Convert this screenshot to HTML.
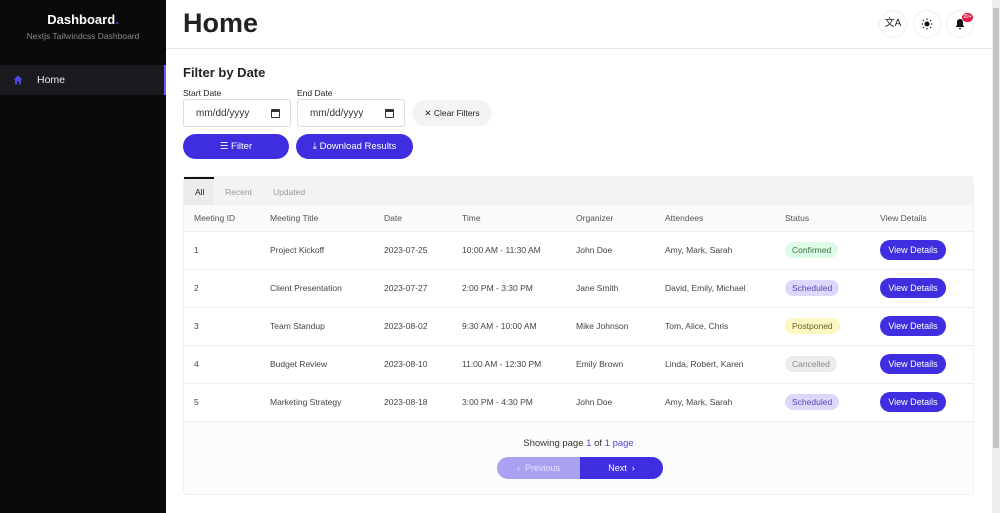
<!DOCTYPE html>
<html><head><style>
*{box-sizing:border-box;margin:0;padding:0}
body{width:1000px;height:513px;overflow:hidden;font-family:"Liberation Sans",sans-serif;background:#fff;position:relative;color:#222}
.sb{position:absolute;left:0;top:0;width:166px;height:513px;background:#0a0a0d}
.sb h1{position:absolute;top:12px;width:166px;text-align:center;color:#fff;font-size:13px;font-weight:bold}
.sb h1 span{color:#4f46e5}
.sb p{position:absolute;top:31px;width:166px;text-align:center;color:#888;font-size:8.5px}
.nav{position:absolute;top:65px;left:0;width:166px;height:30px;background:#1b1b1f;border-right:2px solid #6d5cf0}
.nav span{position:absolute;left:37px;top:9px;color:#eee;font-size:10.5px}
.hd{position:absolute;left:166px;top:0;width:826px;height:49px;border-bottom:1px solid #e8e8e8}
.hd h2{position:absolute;left:17px;top:8px;font-size:27px;font-weight:bold;color:#222}
.ic{position:absolute;top:10px;width:28px;height:28px;border-radius:50%;border:1px solid #eee;background:#fff;font-size:10px;text-align:center;line-height:26px}
.scroll{position:absolute;right:0;top:0;width:8px;height:513px;background:#eee}
.scroll div{position:absolute;left:1px;top:8px;width:6px;height:440px;background:#c4c4c4}
.lbl{position:absolute;font-size:8.5px;color:#222}
.inp{position:absolute;top:99px;width:108px;height:28px;border:1px solid #ddd;border-radius:3px;font-size:10px;padding:8px 0 0 12px;color:#333}
.inp i{position:absolute;right:10px;top:9px;width:9px;height:9px;border:1.5px solid #333;border-top-width:3px;border-radius:1px}
.btn{position:absolute;top:134px;height:25px;border-radius:13px;background:#3f2ee0;color:#fff;font-size:9.5px;text-align:center;line-height:25px}
.card{position:absolute;left:183px;top:176px;width:791px;height:319px;border:1px solid #f0f0f0;border-radius:4px;background:#fcfcfd}
.tabs{position:absolute;left:0;top:0;width:100%;height:28px;background:#f3f3f4}
.tabs span{position:absolute;top:10px;font-size:8.5px;color:#999}
table{position:absolute;left:0;top:28px;width:100%;border-collapse:collapse;font-size:8.5px}
th{height:26px;text-align:left;font-weight:normal;color:#555;background:#fafafa;border-bottom:1px solid #eee}
td{height:38px;color:#444;border-bottom:1px solid #eee;background:#fff}
th:first-child,td:first-child{padding-left:10px}
.b{display:inline-block;padding:3px 7px;border-radius:8px;font-size:8.5px}
.v{display:inline-block;width:66px;height:20px;line-height:20px;text-align:center;border-radius:10px;background:#3f2ee0;color:#fff;font-size:9px}
</style></head><body>
<div class="sb"><h1>Dashboard<span>.</span></h1><p>Nextjs Tailwindcss Dashboard</p>
<div class="nav"><svg style="position:absolute;left:13px;top:10px" width="10" height="10" viewBox="0 0 10 10"><path d="M5 0.5L0.5 4.5H2V9.5H4V6.5H6V9.5H8V4.5H9.5Z" fill="#4f46e5"/></svg><span>Home</span></div></div>
<div class="hd"><h2>Home</h2>
<div class="ic" style="left:713px">文A</div>
<div class="ic" style="left:747px"><svg width="12" height="12" viewBox="0 0 12 12" style="margin-top:7px"><circle cx="6" cy="6" r="2.5" fill="#111"/><g stroke="#111" stroke-width="1"><path d="M6 0.5v1.5M6 10v1.5M0.5 6h1.5M10 6h1.5M2 2l1 1M9 9l1 1M2 10l1-1M9 3l1-1"/></g></svg></div>
<div class="ic" style="left:780px"><svg width="12" height="12" viewBox="0 0 12 12" style="margin-top:7px"><path d="M6 1C3.8 1 3 2.8 3 4.5V7L1.8 9H10.2L9 7V4.5C9 2.8 8.2 1 6 1ZM4.8 10a1.2 1.2 0 0 0 2.4 0Z" fill="#111"/></svg><span style="position:absolute;left:15px;top:2px;width:11px;height:9px;border-radius:5px;background:#e11d48;color:#fff;font-size:5px;line-height:9px">99+</span></div>
</div>
<div class="scroll"><div></div></div>
<div style="position:absolute;left:183px;top:65px;font-size:13px;font-weight:bold">Filter by Date</div>
<div class="lbl" style="left:183px;top:88px">Start Date</div>
<div class="lbl" style="left:297px;top:88px">End Date</div>
<div class="inp" style="left:183px">mm/dd/yyyy<i></i></div>
<div class="inp" style="left:297px">mm/dd/yyyy<i></i></div>
<div style="position:absolute;left:412px;top:100px;width:80px;height:26px;border-radius:13px;background:#f3f3f3;font-size:8.5px;line-height:26px;text-align:center">✕ Clear Filters</div>
<div class="btn" style="left:183px;width:106px">☰ Filter</div>
<div class="btn" style="left:296px;width:117px">⤓ Download Results</div>
<div class="card">
<div class="tabs"><div style="position:absolute;left:0;top:0;width:30px;height:28px;background:#ececed;border-top:2px solid #111"></div><span style="left:11px;color:#222">All</span><span style="left:41px">Recent</span><span style="left:89px">Updated</span></div>
<table>
<tr><th style="width:86px">Meeting ID</th><th style="width:114px">Meeting Title</th><th style="width:78px">Date</th><th style="width:114px">Time</th><th style="width:89px">Organizer</th><th style="width:120px">Attendees</th><th style="width:95px">Status</th><th>View Details</th></tr>
<tr><td>1</td><td>Project Kickoff</td><td>2023-07-25</td><td>10:00 AM - 11:30 AM</td><td>John Doe</td><td>Amy, Mark, Sarah</td><td><span class="b" style="background:#dcfce7;color:#3f6f3f">Confirmed</span></td><td><span class="v">View Details</span></td></tr>
<tr><td>2</td><td>Client Presentation</td><td>2023-07-27</td><td>2:00 PM - 3:30 PM</td><td>Jane Smith</td><td>David, Emily, Michael</td><td><span class="b" style="background:#ddd8fb;color:#5546b0">Scheduled</span></td><td><span class="v">View Details</span></td></tr>
<tr><td>3</td><td>Team Standup</td><td>2023-08-02</td><td>9:30 AM - 10:00 AM</td><td>Mike Johnson</td><td>Tom, Alice, Chris</td><td><span class="b" style="background:#fdf7c3;color:#6b5e20">Postponed</span></td><td><span class="v">View Details</span></td></tr>
<tr><td>4</td><td>Budget Review</td><td>2023-08-10</td><td>11:00 AM - 12:30 PM</td><td>Emily Brown</td><td>Linda, Robert, Karen</td><td><span class="b" style="background:#ececec;color:#888">Cancelled</span></td><td><span class="v">View Details</span></td></tr>
<tr><td>5</td><td>Marketing Strategy</td><td>2023-08-18</td><td>3:00 PM - 4:30 PM</td><td>John Doe</td><td>Amy, Mark, Sarah</td><td><span class="b" style="background:#ddd8fb;color:#5546b0">Scheduled</span></td><td><span class="v">View Details</span></td></tr>
</table>
<div style="position:absolute;left:0;top:261px;width:100%;text-align:center;font-size:9.5px;color:#333">Showing page <span style="color:#4f46e5">1</span> of <span style="color:#4f46e5">1 page</span></div>
<div style="position:absolute;left:313px;top:280px;width:83px;height:22px;border-radius:11px 0 0 11px;background:#a9a2f2;color:#e6e3ff;font-size:9px;line-height:22px;text-align:center">‹ &nbsp;Previous</div>
<div style="position:absolute;left:396px;top:280px;width:83px;height:22px;border-radius:0 11px 11px 0;background:#3f2ee0;color:#fff;font-size:9px;line-height:22px;text-align:center">Next &nbsp;›</div>
</div>
</body></html>
